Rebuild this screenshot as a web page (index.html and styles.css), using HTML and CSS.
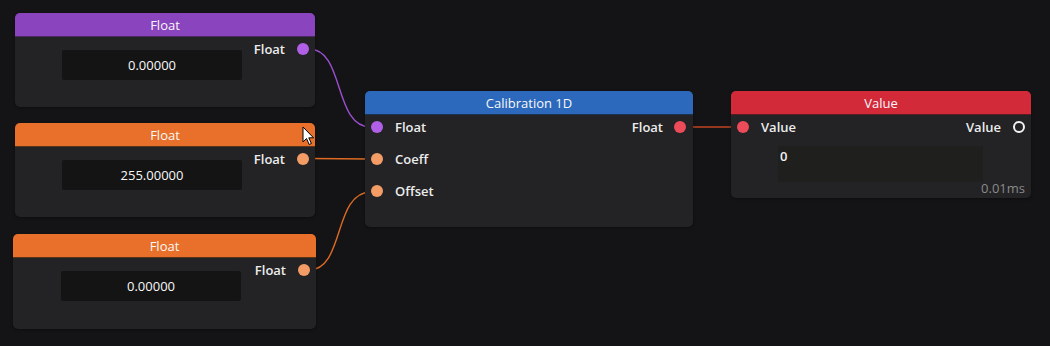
FILE: index.html
```html
<!DOCTYPE html>
<html>
<head>
<meta charset="utf-8">
<link rel="stylesheet" href="styles.css">
</head>
<body>
<div class="canvas">
  <svg class="wires" width="1050" height="346" viewBox="0 0 1050 346">
    <path d="M309 49 C 345 49, 333 127, 371 127" stroke="#9b4fd0" stroke-width="1.4" fill="none"/>
    <path d="M309 158.5 L 371 159" stroke="#dd6a22" stroke-width="1.6" fill="none"/>
    <path d="M309 270 C 345 270, 333 192, 371 192" stroke="#dd6a22" stroke-width="1.4" fill="none"/>
    <path d="M686 127 L 737 127" stroke="#c04222" stroke-width="1.6" fill="none"/>
  </svg>

  <div class="node float-node n1">
    <div class="head purple">Float</div>
    <div class="body">
      <div class="field">0.00000</div>
      <div class="out"><span>Float</span><i class="port p-purple"></i></div>
    </div>
  </div>

  <div class="node float-node n2">
    <div class="head orange">Float</div>
    <div class="body">
      <div class="field">255.00000</div>
      <div class="out"><span>Float</span><i class="port p-orange"></i></div>
    </div>
  </div>

  <div class="node float-node n3">
    <div class="head orange">Float</div>
    <div class="body">
      <div class="field">0.00000</div>
      <div class="out"><span>Float</span><i class="port p-orange"></i></div>
    </div>
  </div>

  <div class="node calib">
    <div class="head blue">Calibration 1D</div>
    <div class="cbody">
      <div class="inputs">
        <div class="in"><i class="port p-purple"></i><span>Float</span></div>
        <div class="in"><i class="port p-orange"></i><span>Coeff</span></div>
        <div class="in"><i class="port p-orange"></i><span>Offset</span></div>
      </div>
      <div class="outputs">
        <div class="out"><span>Float</span><i class="port p-red"></i></div>
      </div>
    </div>
  </div>

  <div class="node value">
    <div class="head red">Value</div>
    <div class="vbody">
      <div class="vrow">
        <div class="in"><i class="port p-red"></i><span>Value</span></div>
        <div class="out"><span>Value</span><i class="port p-hollow"></i></div>
      </div>
      <div class="display">0</div>
      <div class="time">0.01ms</div>
    </div>
  </div>

  <svg class="cursor" width="14" height="22" viewBox="0 0 14 22">
    <path d="M1 1 L1 16 L4.5 12.5 L7.2 18.5 L9.4 17.5 L6.8 11.8 L11.5 11.8 Z" fill="#ffffff" stroke="#000000" stroke-width="1" stroke-linejoin="round"/>
  </svg>
</div>
</body>
</html>
```

FILE: styles.css
```css
html, body {
  margin: 0;
  padding: 0;
  background: #141416;
}
.canvas {
  position: relative;
  width: 1050px;
  height: 346px;
  overflow: hidden;
  background: #141416;
  font-family: "Open Sans", "Noto Sans", sans-serif;
  color: #f2f2f2;
}
.wires {
  position: absolute;
  left: 0;
  top: 0;
}
.node {
  position: absolute;
  background: #232325;
  border-radius: 5px;
  overflow: hidden;
  box-shadow: 0 1px 3px rgba(0,0,0,0.35);
}
.head {
  height: 23px;
  line-height: 24px;
  text-align: center;
  font-size: 13px;
  color: #f8f8f8;
  border-bottom: 1px solid #3a2a1e;
}
.purple { background: #8a44bd; border-bottom-color: #4a2a60; }
.orange { background: #e8702a; border-bottom-color: #5a3418; }
.blue { background: #2c69bd; border-bottom-color: #1c3350; }
.red { background: #d32a3a; border-bottom-color: #5a1c22; }

.n1 { left: 15px; top: 13px; width: 300px; height: 94px; }
.n2 { left: 15px; top: 123px; width: 300px; height: 94px; }
.n3 { left: 13px; top: 234px; width: 303px; height: 95px; }

.body {
  display: flex;
  align-items: flex-start;
  padding-left: 47px;
}
.n3 .body { padding-left: 48px; }
.field {
  width: 180px;
  height: 30px;
  margin-top: 13px;
  background: #141415;
  border-radius: 2px;
  line-height: 30px;
  text-align: center;
  font-size: 13px;
  color: #f8f8f8;
}
.out, .in {
  display: flex;
  align-items: center;
  gap: 12px;
  height: 24px;
  font-size: 13px;
  font-weight: 600;
  color: #ececec;
}
.body .out {
  margin-left: auto;
  margin-right: 6px;
}
.port {
  display: block;
  width: 12px;
  height: 12px;
  border-radius: 50%;
  box-sizing: border-box;
}
.p-purple { background: #b05fe6; }
.p-orange { background: #f39c66; }
.p-red { background: #ec4b5a; }
.p-hollow { border: 2px solid #f2f2f2; background: transparent; width: 12px; height: 12px; }

.calib { left: 365px; top: 91px; width: 328px; height: 136px; }
.cbody {
  display: flex;
  justify-content: space-between;
  padding: 0 7px 0 6px;
}
.inputs {
  display: flex;
  flex-direction: column;
  gap: 8px;
}
.in { gap: 12px; }
.outputs .out { gap: 11px; }

.value { left: 731px; top: 91px; width: 300px; height: 107px; }
.vbody {
  display: flex;
  flex-direction: column;
  padding: 0 6px 0 6px;
}
.vrow {
  display: flex;
  justify-content: space-between;
  align-items: center;
}
.vrow .out { gap: 12px; }
.vrow .in { gap: 12px; }
.display {
  margin: 7px 0 0 41px;
  width: 205px;
  height: 36px;
  background: #1f1f1e;
  font-size: 13px;
  font-weight: 600;
  padding-left: 2px;
  line-height: 20px;
  box-sizing: border-box;
}
.time {
  align-self: flex-end;
  font-size: 13px;
  color: #8a8a8a;
  line-height: 14px;
  margin-top: -1px;
}

.cursor {
  position: absolute;
  left: 302px;
  top: 126px;
}
```
